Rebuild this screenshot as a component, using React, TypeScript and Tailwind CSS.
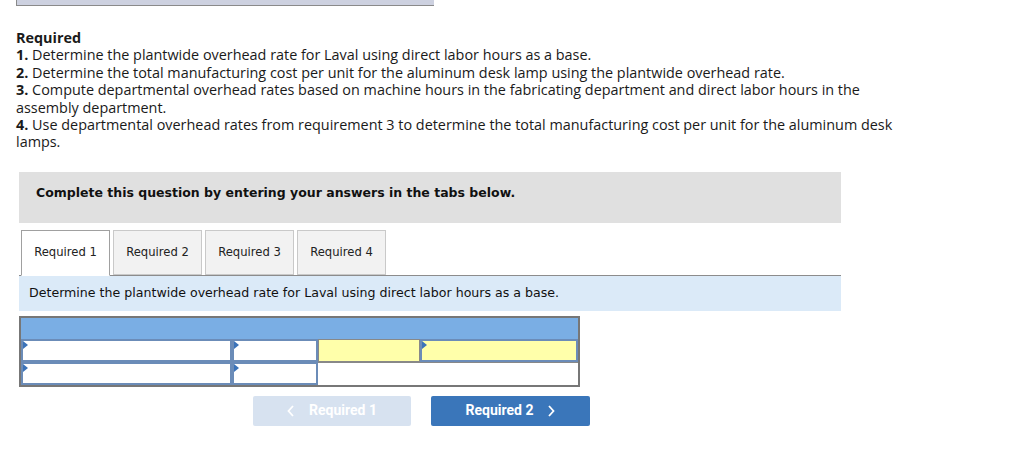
import React from 'react';

const requirements = [
  { n: '1.', text: 'Determine the plantwide overhead rate for Laval using direct labor hours as a base.' },
  { n: '2.', text: 'Determine the total manufacturing cost per unit for the aluminum desk lamp using the plantwide overhead rate.' },
  { n: '3.', text: 'Compute departmental overhead rates based on machine hours in the fabricating department and direct labor hours in the assembly department.' },
  { n: '4.', text: 'Use departmental overhead rates from requirement 3 to determine the total manufacturing cost per unit for the aluminum desk lamps.' },
];

const tabs = ['Required 1', 'Required 2', 'Required 3', 'Required 4'];

function Marker() {
  return (
    <span className="absolute left-0 top-0 w-0 h-0 border-t-[4px] border-b-[4px] border-l-[5px] border-t-transparent border-b-transparent border-l-[#3b73b9]" />
  );
}

function InputCell({ w, yellow = false }: { w: string; yellow?: boolean }) {
  return (
    <div className={`relative ${w} h-full border-2 border-[#6b8cb8] ${yellow ? 'bg-[#ffffaa]' : 'bg-white'}`}>
      <Marker />
    </div>
  );
}

function Chevron({ dir }: { dir: 'left' | 'right' }) {
  return (
    <svg width="8" height="12" viewBox="0 0 8 12" fill="none" stroke="currentColor" strokeWidth="1.8">
      {dir === 'left' ? <path d="M6 1 L1.5 6 L6 11" /> : <path d="M2 1 L6.5 6 L2 11" />}
    </svg>
  );
}

export default function App() {
  return (
    <div className="w-[1024px] h-[456px] bg-white overflow-hidden text-[#222]">
      <div className="ml-4 w-[418px] h-[6px] bg-[#cdd1e0] border-l border-b border-[#8a8a8a]" />

      <div className="pl-4 w-[896px] mt-[23px] text-[14.4px] leading-[17.4px] [font-family:'Open_Sans',sans-serif] text-[#1a1a1a]">
        <div className="font-bold">Required</div>
        {requirements.map((r) => (
          <div key={r.n}>
            <span className="font-bold">{r.n}</span> {r.text}
          </div>
        ))}
      </div>

      <div className="ml-[19px] w-[822px] [font-family:'DejaVu_Sans',sans-serif]">
        <div className="mt-[21px] h-[51px] bg-[#e0e0e0] flex items-center pl-[17px] pb-[8px] text-[12.5px] font-bold text-[#111]">
          Complete this question by entering your answers in the tabs below.
        </div>

        <div className="mt-[8px] flex items-end h-[45px] border-b border-[#8c8c8c] text-[11.6px] text-[#222]">
          {tabs.map((t, i) => (
            <div
              key={t}
              className={`w-[89px] flex items-center justify-center border ${
                i === 0 ? 'ml-[2px] bg-white border-[#a0a0a0] border-b-white -mb-px h-[46px]' : 'ml-[3px] h-[45px] bg-[#f2f2f2] border-[#c9c9c9]'
              }`}
            >
              {t}
            </div>
          ))}
        </div>

        <div className="h-[35px] bg-[#dbeaf8] flex items-center pl-[10px] text-[12.6px] text-[#111]">
          Determine the plantwide overhead rate for Laval using direct labor hours as a base.
        </div>

        <div className="mt-[5px] w-[561px] border-2 border-[#777]">
          <div className="h-[21px] bg-[#7aaee4]" />
          <div className="flex h-[23px] bg-[#7aaee4]">
            <InputCell w="w-[211px]" />
            <InputCell w="w-[86px]" />
            <div className="w-[102px] h-full bg-[#ffffaa] border border-[#888]" />
            <InputCell w="w-[158px]" yellow />
          </div>
          <div className="flex h-[23px] bg-[#7aaee4]">
            <InputCell w="w-[211px]" />
            <InputCell w="w-[86px]" />
            <div className="flex-1 h-full bg-white border-t border-[#888]" />
          </div>
        </div>

        <div className="mt-[9px] flex gap-[20px] pl-[234px] [font-family:'Roboto',sans-serif] text-[14px] font-bold text-white">
          <div className="w-[158px] h-[30px] rounded-[2px] bg-[#d7e2f0] flex items-center justify-center gap-[14px]">
            <Chevron dir="left" />
            <span>Required 1</span>
          </div>
          <div className="w-[159px] h-[30px] rounded-[2px] bg-[#3a76ba] flex items-center justify-center gap-[14px]">
            <span>Required 2</span>
            <Chevron dir="right" />
          </div>
        </div>
      </div>
    </div>
  );
}
